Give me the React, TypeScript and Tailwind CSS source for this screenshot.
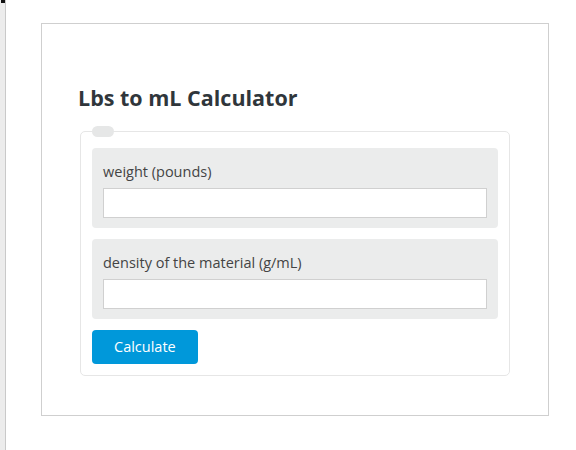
import React from 'react'

function Field({ label }: { label: string }) {
  return (
    <div className="rounded-[4px] bg-[#ebecec] px-[11px] pt-[14px] pb-[10px]">
      <label className="block text-[14.5px] leading-5 text-[#444]">{label}</label>
      <input
        type="text"
        className="mt-[6px] block h-[30px] w-full border border-[#d0d0d0] bg-white px-2 outline-none"
      />
    </div>
  )
}

export default function App() {
  return (
    <div className="flex h-[450px] w-[576px] bg-white font-['Open_Sans',sans-serif]">
      {/* left edge strip */}
      <div className="relative h-full w-[6px] border-r border-[#c9c9c9] bg-[#ececec]">
        <div className="absolute top-0 left-[1px] h-[3px] w-[4px] bg-[#111]" />
      </div>

      <div className="ml-[35px] mt-[23px]">
        <div className="w-[508px] border border-[#cfcfcf] px-[38px] pt-[60px] pb-[39px]">
          <h1 className="-ml-[2px] mb-[19px] text-[21.5px] leading-[28px] font-bold text-[#30363b]">
            Lbs to mL Calculator
          </h1>

          {/* fieldset */}
          <div className="relative rounded-[5px] border border-[#e6e6e6] px-[11px] pt-[16px] pb-[11px]">
            <div className="absolute -top-[6px] left-[11px] h-[11px] w-[22px] rounded-full bg-[#e6e7e7]" />
            <div className="flex flex-col gap-[11px]">
              <Field label="weight (pounds)" />
              <Field label="density of the material (g/mL)" />
              <div>
                <button className="h-[34px] rounded-[4px] bg-[#0098da] px-[22px] text-[14.5px] text-white">
                  Calculate
                </button>
              </div>
            </div>
          </div>
        </div>
      </div>
    </div>
  )
}
